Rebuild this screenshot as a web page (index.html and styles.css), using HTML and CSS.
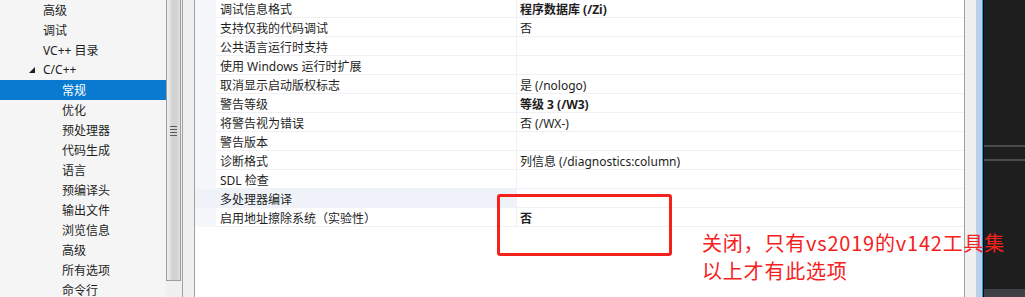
FILE: index.html
```html
<!DOCTYPE html>
<html lang="zh-CN">
<head>
  <meta charset="UTF-8">
  <title>C/C++ 常规</title>
  <link rel="stylesheet" href="styles.css">
</head>
<body>
<div class="window">
  <div class="tree">
    <div class="node">高级</div>
    <div class="node">调试</div>
    <div class="node">VC++ 目录</div>
    <div class="node open"><svg class="arrow" width="6" height="6" viewBox="0 0 6 6"><polygon points="6,0 6,6 0,6" fill="#1e1e1e"/></svg>C/C++</div>
    <div class="node sub selected">常规</div>
    <div class="node sub">优化</div>
    <div class="node sub">预处理器</div>
    <div class="node sub">代码生成</div>
    <div class="node sub">语言</div>
    <div class="node sub">预编译头</div>
    <div class="node sub">输出文件</div>
    <div class="node sub">浏览信息</div>
    <div class="node sub">高级</div>
    <div class="node sub">所有选项</div>
    <div class="node sub">命令行</div>
  </div>
  <div class="vscroll">
    <div class="thumb"><div class="grip"><i></i><i></i><i></i><i></i></div></div>
  </div>
  <div class="splitter"></div>
  <div class="grid">
    <div class="rows">
      <div class="row"><div class="gutter"></div><div class="name">调试信息格式</div><div class="value bold">程序数据库 (/Zi)</div></div>
      <div class="row"><div class="gutter"></div><div class="name">支持仅我的代码调试</div><div class="value">否</div></div>
      <div class="row"><div class="gutter"></div><div class="name">公共语言运行时支持</div><div class="value"></div></div>
      <div class="row"><div class="gutter"></div><div class="name">使用 Windows 运行时扩展</div><div class="value"></div></div>
      <div class="row"><div class="gutter"></div><div class="name">取消显示启动版权标志</div><div class="value">是 (/nologo)</div></div>
      <div class="row"><div class="gutter"></div><div class="name">警告等级</div><div class="value bold">等级 3 (/W3)</div></div>
      <div class="row"><div class="gutter"></div><div class="name">将警告视为错误</div><div class="value">否 (/WX-)</div></div>
      <div class="row"><div class="gutter"></div><div class="name">警告版本</div><div class="value"></div></div>
      <div class="row"><div class="gutter"></div><div class="name">诊断格式</div><div class="value">列信息 (/diagnostics:column)</div></div>
      <div class="row"><div class="gutter"></div><div class="name">SDL 检查</div><div class="value"></div></div>
      <div class="row hover"><div class="gutter"></div><div class="name">多处理器编译</div><div class="value"></div></div>
      <div class="row"><div class="gutter"></div><div class="name">启用地址擦除系统（实验性）</div><div class="value bold">否</div></div>
    </div>
  </div>
  <div class="edge"></div>
  <div class="accent"></div>
  <div class="dark">
    <div class="dark-top"></div>
    <div class="dark-line"></div>
    <div class="dark-gap"></div>
    <div class="dark-line"></div>
    <div class="dark-fill"></div>
    <div class="dark-bottom"></div>
  </div>

  <div class="mark-box"></div>
  <div class="mark-text">关闭，只有vs2019的v142工具集<br>以上才有此选项</div>
</div>
</body>
</html>
```

FILE: styles.css
```css
html, body {
  margin: 0;
  padding: 0;
  overflow: hidden;
}
body {
  font-family: "Noto Sans", "Noto Sans CJK SC", sans-serif;
  font-size: 12px;
  color: #1e1e1e;
  background: #ffffff;
}
.window {
  position: relative;
  display: flex;
  width: 1025px;
  height: 297px;
  overflow: hidden;
}

/* tree */
.tree {
  width: 166px;
  flex: none;
  background: #f5f5f5;
}
.node {
  height: 20px;
  line-height: 22px;
  padding-left: 43px;
  white-space: nowrap;
  position: relative;
}
.node.open {
  display: flex;
  align-items: center;
}
.arrow {
  margin-left: -14px;
  margin-right: 8px;
  margin-top: 0;
}
.node.sub {
  padding-left: 62px;
}
.node.selected {
  background: #0a7ad1;
  color: #ffffff;
}

/* scrollbar + splitter */
.vscroll {
  width: 16px;
  flex: none;
  background: #f0f0f0;
}
.thumb {
  width: 13px;
  height: 281px;
  margin-top: -2px;
  border: 1px solid #9d9d9d;
  background: linear-gradient(to right, #efefef 0, #e5e5e5 20%, #d3d3d3 40%, #d3d3d3 72%, #e1e1e1 100%);
  position: relative;
}
.grip {
  position: absolute;
  left: 3px;
  top: 127px;
  display: flex;
  flex-direction: column;
  gap: 2px;
}
.grip i {
  display: block;
  width: 7px;
  height: 1px;
  background: #5a5a5a;
}
.splitter {
  width: 11px;
  flex: none;
  background: #f0f0f0;
  border-left: 1px solid #a0a0a0;
  border-right: 1px solid #a0a0a0;
}

/* property grid */
.grid {
  width: 769px;
  flex: none;
  background: #ffffff;
  border-right: 1px solid #a0a0a0;
}
.rows {
  margin-top: -1px;
}
.row {
  display: flex;
  height: 19px;
}
.gutter {
  width: 21px;
  flex: none;
  background: #f5f7fb;
}
.name, .value {
  height: 18px;
  line-height: 21px;
  border-bottom: 1px solid #eff1f7;
  white-space: nowrap;
  overflow: hidden;
}
.name {
  width: 296px;
  flex: none;
  padding-left: 4px;
  border-right: 1px solid #eff1f7;
}
.value {
  flex: 1;
  padding-left: 3px;
}
.bold {
  font-weight: 700;
}
.row.hover .gutter,
.row.hover .name {
  background: #eff3f9;
}

/* right side */
.edge {
  width: 11px;
  flex: none;
  background: #f0f0f0;
}
.accent {
  width: 6px;
  flex: none;
  background: #b9d1ea;
  border-right: 1px solid #1ba1e2;
  box-shadow: 1px 0 0 #000000;
}
.dark {
  flex: 1;
  margin-left: 1px;
  display: flex;
  flex-direction: column;
  background: #1e1e1e;
}
.dark-top {
  height: 145px;
}
.dark-line {
  height: 2px;
  background: #4a4a4a;
}
.dark-gap {
  height: 12px;
}
.dark-fill {
  flex: 1;
}
.dark-bottom {
  height: 8px;
  background: #3f3f46;
}

/* annotation */
.mark-box {
  position: absolute;
  left: 497px;
  top: 194px;
  width: 169px;
  height: 56px;
  border: 3px solid #f5211d;
  border-radius: 3px;
}
.mark-text {
  position: absolute;
  left: 702px;
  top: 229px;
  font-family: "Noto Sans CJK SC", sans-serif;
  font-size: 20px;
  letter-spacing: 0.8px;
  line-height: 28px;
  color: #f5211d;
  white-space: nowrap;
}
```
